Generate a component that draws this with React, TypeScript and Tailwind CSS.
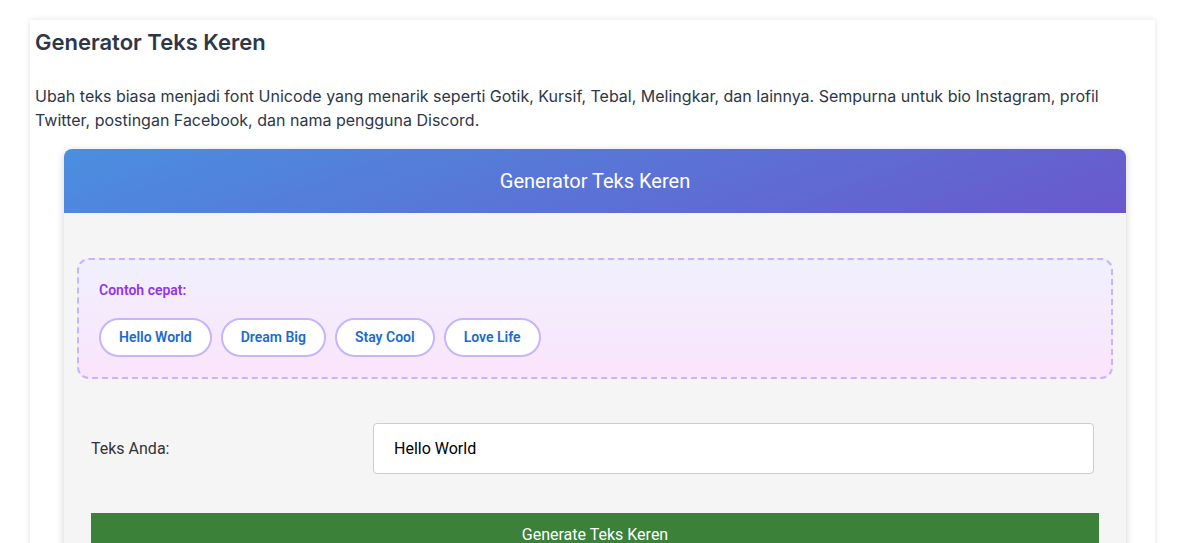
export default function App() {
  const ex = ["Hello World", "Dream Big", "Stay Cool", "Love Life"];
  return (
    <div className="min-h-[800px] bg-white pt-5" style={{ fontFamily: "Inter, 'Noto Sans', sans-serif" }}>
      <div className="mx-[30px] w-[1125px] bg-white px-[5px] pb-10 shadow-[0_0_6px_rgba(0,0,0,0.12)]">
        <h1 className="pt-[7px] text-[22px] font-semibold leading-[30px] text-[#2d3748]">Generator Teks Keren</h1>
        <p className="mt-[27px] text-[16px] leading-[24px] text-[#2d3748]">
          Ubah teks biasa menjadi font Unicode yang menarik seperti Gotik, Kursif, Tebal, Melingkar, dan lainnya. Sempurna untuk bio Instagram, profil Twitter, postingan Facebook, dan nama pengguna Discord.
        </p>
        <div className="ml-[29px] mr-[24px] mt-[17px] overflow-hidden rounded-lg bg-[#f5f5f5] shadow-[0_2px_8px_rgba(0,0,0,0.18)]" style={{ fontFamily: "Roboto, 'Noto Sans', sans-serif" }}>
          <div className="flex h-16 items-center justify-center bg-[linear-gradient(160deg,#4a8fe0,#6a58cc)] text-[20px] text-white">
            Generator Teks Keren
          </div>
          <div className="px-[13px] pt-[45px] pb-10">
            <div className="rounded-xl border-2 border-dashed border-[#c4b5fd] bg-gradient-to-b from-[#f0f0fd] to-[#fae4fd] px-5 pt-[20px] pb-[20px]">
              <div className="text-[14px] font-semibold text-[#9333ea]">Contoh cepat:</div>
              <div className="mt-[17px] flex gap-[9px]">
                {ex.map((e) => (
                  <button key={e} className="h-[39px] rounded-full border-2 border-[#c4b5fd] bg-white px-[18px] text-[14px] font-semibold text-[#1a6bd0]">
                    {e}
                  </button>
                ))}
              </div>
            </div>
            <div className="mt-[44px] flex items-center px-[14px]">
              <label className="w-[282px] text-[16px] text-[#333]">Teks Anda:</label>
              <input className="h-[51px] w-[721px] rounded border border-[#ccc] bg-white px-5 text-[16px] text-black outline-none" defaultValue="Hello World" />
            </div>
            <button className="mx-[14px] mt-[39px] h-11 w-[1008px] bg-[#3b8139] text-[16px] text-white">Generate Teks Keren</button>
          </div>
        </div>
      </div>
    </div>
  );
}
